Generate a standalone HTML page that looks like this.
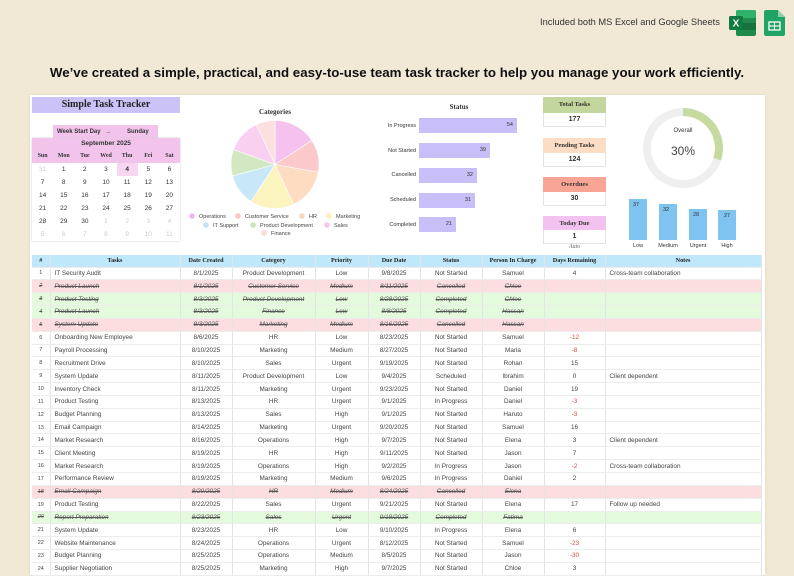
<!DOCTYPE html>
<html><head><meta charset="utf-8"><style>
*{margin:0;padding:0;box-sizing:border-box}
body{width:794px;height:572px;overflow:hidden;background:#f1e8d5;font-family:"Liberation Sans",sans-serif;position:relative;color:#333}
.a{position:absolute}
.serif{font-family:"Liberation Serif",serif;font-weight:bold}
.panel{left:30px;top:95px;width:735px;height:480px;background:#fff;box-shadow:0 0 2px #d8cfbb}
.cal{left:32px;top:138px;width:148px;height:103px;box-shadow:0 0 2px #ccc;background:#fff}
.cg{display:grid;grid-template-columns:repeat(7,1fr);font-size:6.5px;text-align:center}
.cg div{height:13px;line-height:13px}
.g{color:#ccc}
.kh{left:543px;width:63px;height:16px;font-size:6.5px;text-align:center;line-height:16px}
.kv{left:543px;width:63px;height:14px;font-size:7px;font-weight:bold;text-align:center;line-height:14px;border:1px solid #e4e4e4;border-top:none;background:#fff}
.sl{width:60px;text-align:right;font-size:5.5px;left:356px}
.sb{left:419px;height:15px;background:#c8bff8;font-size:5.5px;text-align:right;padding-right:4px;line-height:15px}
table{position:absolute;left:32px;top:255px;border-collapse:collapse;table-layout:fixed;width:729px}
td,th{height:12.85px;font-size:6.4px;text-align:center;border-right:1px solid #e4e4e4;border-bottom:1px solid #ececec;white-space:nowrap;overflow:hidden;padding:0 2px;color:#444}
th{height:12px;background:#bfe8fb;font-family:"Liberation Serif",serif;font-size:6.2px;color:#222}
td:nth-child(2),td:nth-child(10){text-align:left;padding-left:4px}
td:first-child{font-size:5.5px}
tr.p td{background:#fcdde0;text-decoration:line-through;font-style:italic;color:#555}
tr.gr td{background:#e4fadc;text-decoration:line-through;font-style:italic;color:#555}
.r{color:#e04848!important}
</style></head><body>
<div class="a" style="left:540px;top:17px;font-size:9.3px;color:#333">Included both MS Excel and Google Sheets</div>
<svg class="a" style="left:727px;top:9px" width="62" height="28" viewBox="0 0 62 28">
<rect x="9" y="1" width="20" height="26" rx="2" fill="#1f8a4c"/><rect x="9" y="1" width="20" height="8" rx="2" fill="#2fb36a"/><rect x="9" y="14" width="20" height="7" fill="#17713c"/>
<rect x="2" y="7" width="14" height="14" rx="1.5" fill="#107c41"/><text x="9" y="17.5" font-size="10" font-weight="bold" fill="#fff" text-anchor="middle" font-family="Liberation Sans">X</text>
<path d="M37 3 Q37 1 39 1 L51 1 L58 8 L58 25 Q58 27 56 27 L39 27 Q37 27 37 25Z" fill="#21a366"/><path d="M51 1 L51 8 L58 8Z" fill="#8ed1a9"/>
<rect x="42" y="13" width="11" height="8" fill="none" stroke="#fff" stroke-width="1.3"/><line x1="42" y1="17" x2="53" y2="17" stroke="#fff" stroke-width="1.1"/><line x1="47.5" y1="13" x2="47.5" y2="21" stroke="#fff" stroke-width="1.1"/>
</svg>
<div class="a" style="left:0;width:794px;top:65px;text-align:center;font-size:13.3px;font-weight:bold;color:#111">We’ve created a simple, practical, and easy-to-use team task tracker to help you manage your work efficiently.</div>
<div class="a panel"></div>
<div class="a serif" style="left:32px;top:97px;width:148px;height:16px;background:#cbc3f7;text-align:center;font-size:10px;line-height:16px;color:#222">Simple Task Tracker</div>
<div class="a" style="left:53px;top:125px;width:105px;height:14px;background:#f2c4ec;font-size:6px;font-weight:bold;line-height:14px"><span style="position:absolute;left:4px">Week Start Day</span><span style="position:absolute;left:52px">→</span><span style="position:absolute;left:74px">Sunday</span></div>
<div class="a cal">
<div style="background:#f2c4ec;height:12px;text-align:center;font-size:6.5px;font-weight:bold;line-height:12px">September 2025</div>
<div class="cg serif" style="background:#f2c4ec;font-size:6px"><div>Sun</div><div>Mon</div><div>Tue</div><div>Wed</div><div>Thu</div><div>Fri</div><div>Sat</div></div>
<div class="cg">
<div class="g">31</div><div>1</div><div>2</div><div>3</div><div style="background:#f7d6f1;font-weight:bold">4</div><div>5</div><div>6</div>
<div>7</div><div>8</div><div>9</div><div>10</div><div>11</div><div>12</div><div>13</div>
<div>14</div><div>15</div><div>16</div><div>17</div><div>18</div><div>19</div><div>20</div>
<div>21</div><div>22</div><div>23</div><div>24</div><div>25</div><div>26</div><div>27</div>
<div>28</div><div>29</div><div>30</div><div class="g">1</div><div class="g">2</div><div class="g">3</div><div class="g">4</div>
<div class="g">5</div><div class="g">6</div><div class="g">7</div><div class="g">8</div><div class="g">9</div><div class="g">10</div><div class="g">11</div>
</div></div>
<div class="a serif" style="left:240px;top:108px;width:70px;text-align:center;font-size:7px">Categories</div>
<svg class="a" style="left:0;top:0" width="794" height="260">
<g stroke="#fff" stroke-width="0.6">
<path d="M275 164.5 L275 120.5 A44 44 0 0 1 311.9 140.5Z" fill="#f5c2f0"/>
<path d="M275 164.5 L311.9 140.5 A44 44 0 0 1 318.3 172.2Z" fill="#fcc9cb"/>
<path d="M275 164.5 L318.3 172.2 A44 44 0 0 1 293.6 204.4Z" fill="#fddcc2"/>
<path d="M275 164.5 L293.6 204.4 A44 44 0 0 1 251 201.4Z" fill="#fbf4bf"/>
<path d="M275 164.5 L251 201.4 A44 44 0 0 1 232.5 175.9Z" fill="#c8e8f9"/>
<path d="M275 164.5 L232.5 175.9 A44 44 0 0 1 233.6 149.5Z" fill="#d2e8c3"/>
<path d="M275 164.5 L233.6 149.5 A44 44 0 0 1 256.4 124.6Z" fill="#f9d0f0"/>
<path d="M275 164.5 L256.4 124.6 A44 44 0 0 1 275 120.5Z" fill="#fcdfdf"/>
</g>
<g font-size="5.5" font-family="Liberation Sans" fill="#444">
<circle cx="192" cy="216" r="2.8" fill="#f2b8ee"/><text x="199" y="218">Operations</text>
<circle cx="238" cy="216" r="2.8" fill="#fcc3c3"/><text x="245" y="218">Customer Service</text>
<circle cx="302" cy="216" r="2.8" fill="#fcd8bb"/><text x="309" y="218">HR</text>
<circle cx="329" cy="216" r="2.8" fill="#fbf0b5"/><text x="336" y="218">Marketing</text>
<circle cx="206" cy="225" r="2.8" fill="#bfe3f8"/><text x="213" y="227">IT Support</text>
<circle cx="253" cy="225" r="2.8" fill="#c9e4bb"/><text x="260" y="227">Product Development</text>
<circle cx="327" cy="225" r="2.8" fill="#f7c8ee"/><text x="334" y="227">Sales</text>
<circle cx="264" cy="233" r="2.8" fill="#fcd8d8"/><text x="271" y="235">Finance</text>
</g>
<circle cx="683" cy="148" r="36" fill="none" stroke="#efefef" stroke-width="8"/>
<path d="M683 112 A36 36 0 0 1 717.2 159.1" fill="none" stroke="#c6d99f" stroke-width="8"/>
<g fill="#7fc3f1"><rect x="629" y="199" width="18" height="41"/><rect x="659" y="204" width="18" height="36"/><rect x="689" y="209" width="18" height="31"/><rect x="718" y="210" width="18" height="30"/></g>
<g font-size="5.5" font-family="Liberation Sans" fill="#333" text-anchor="middle">
<text x="636" y="206">37</text><text x="666" y="211">32</text><text x="696" y="216">28</text><text x="727" y="217">27</text>
<text x="638" y="247">Low</text><text x="668" y="247">Medium</text><text x="698" y="247">Urgent</text><text x="727" y="247">High</text>
</g>
</svg>
<div class="a" style="left:663px;top:128px;width:40px;text-align:center;font-size:6px">Overall</div>
<div class="a" style="left:653px;top:144px;width:60px;text-align:center;font-size:12px;color:#444">30%</div>
<div class="a serif" style="left:440px;top:103px;width:38px;text-align:center;font-size:7px">Status</div>
<div class="a sl" style="top:123px">In Progress</div><div class="a sb" style="top:118px;width:98px">54</div>
<div class="a sl" style="top:148px">Not Started</div><div class="a sb" style="top:143px;width:71px">39</div>
<div class="a sl" style="top:172px">Cancelled</div><div class="a sb" style="top:168px;width:58px">32</div>
<div class="a sl" style="top:197px">Scheduled</div><div class="a sb" style="top:193px;width:56px">31</div>
<div class="a sl" style="top:222px">Completed</div><div class="a sb" style="top:217px;width:37px">21</div>
<div class="a kh serif" style="top:97px;background:#c3d69d">Total Tasks</div><div class="a kv" style="top:113px">177</div>
<div class="a kh serif" style="top:138px;background:#fcdcc3">Pending Tasks</div><div class="a kv" style="top:153px">124</div>
<div class="a kh serif" style="top:177px;background:#f8a595">Overdues</div><div class="a kv" style="top:192px">30</div>
<div class="a kh serif" style="top:216px;background:#f3c2ee">Today Due</div><div class="a kv" style="top:230px">1</div>
<div class="a" style="left:543px;top:244px;width:63px;text-align:center;font-size:6px;font-style:italic;font-family:'Liberation Serif',serif;color:#666">Auto</div>
<table>
<colgroup><col style="width:18px"><col style="width:130px"><col style="width:52px"><col style="width:83px"><col style="width:53px"><col style="width:52px"><col style="width:62px"><col style="width:62px"><col style="width:61px"><col style="width:156px"></colgroup>
<tr><th>#</th><th>Tasks</th><th>Date Created</th><th>Category</th><th>Priority</th><th>Due Date</th><th>Status</th><th>Person In Charge</th><th>Days Remaining</th><th>Notes</th></tr>
<tr><td>1</td><td>IT Security Audit</td><td>8/1/2025</td><td>Product Development</td><td>Low</td><td>9/8/2025</td><td>Not Started</td><td>Samuel</td><td>4</td><td>Cross-team collaboration</td></tr>
<tr class="p"><td>2</td><td>Product Launch</td><td>8/1/2025</td><td>Customer Service</td><td>Medium</td><td>8/11/2025</td><td>Cancelled</td><td>Chloe</td><td></td><td></td></tr>
<tr class="gr"><td>3</td><td>Product Testing</td><td>8/3/2025</td><td>Product Development</td><td>Low</td><td>8/28/2025</td><td>Completed</td><td>Chloe</td><td></td><td></td></tr>
<tr class="gr"><td>4</td><td>Product Launch</td><td>8/3/2025</td><td>Finance</td><td>Low</td><td>8/8/2025</td><td>Completed</td><td>Hassan</td><td></td><td></td></tr>
<tr class="p"><td>5</td><td>System Update</td><td>8/3/2025</td><td>Marketing</td><td>Medium</td><td>8/16/2025</td><td>Cancelled</td><td>Hassan</td><td></td><td></td></tr>
<tr><td>6</td><td>Onboarding New Employee</td><td>8/6/2025</td><td>HR</td><td>Low</td><td>8/23/2025</td><td>Not Started</td><td>Samuel</td><td class="r">-12</td><td></td></tr>
<tr><td>7</td><td>Payroll Processing</td><td>8/10/2025</td><td>Marketing</td><td>Medium</td><td>8/27/2025</td><td>Not Started</td><td>Maria</td><td class="r">-8</td><td></td></tr>
<tr><td>8</td><td>Recruitment Drive</td><td>8/10/2025</td><td>Sales</td><td>Urgent</td><td>9/19/2025</td><td>Not Started</td><td>Rohan</td><td>15</td><td></td></tr>
<tr><td>9</td><td>System Update</td><td>8/11/2025</td><td>Product Development</td><td>Low</td><td>9/4/2025</td><td>Scheduled</td><td>Ibrahim</td><td>0</td><td>Client dependent</td></tr>
<tr><td>10</td><td>Inventory Check</td><td>8/11/2025</td><td>Marketing</td><td>Urgent</td><td>9/23/2025</td><td>Not Started</td><td>Daniel</td><td>19</td><td></td></tr>
<tr><td>11</td><td>Product Testing</td><td>8/13/2025</td><td>HR</td><td>Urgent</td><td>9/1/2025</td><td>In Progress</td><td>Daniel</td><td class="r">-3</td><td></td></tr>
<tr><td>12</td><td>Budget Planning</td><td>8/13/2025</td><td>Sales</td><td>High</td><td>9/1/2025</td><td>Not Started</td><td>Haruto</td><td class="r">-3</td><td></td></tr>
<tr><td>13</td><td>Email Campaign</td><td>8/14/2025</td><td>Marketing</td><td>Urgent</td><td>9/20/2025</td><td>Not Started</td><td>Samuel</td><td>16</td><td></td></tr>
<tr><td>14</td><td>Market Research</td><td>8/16/2025</td><td>Operations</td><td>High</td><td>9/7/2025</td><td>Not Started</td><td>Elena</td><td>3</td><td>Client dependent</td></tr>
<tr><td>15</td><td>Client Meeting</td><td>8/19/2025</td><td>HR</td><td>High</td><td>9/11/2025</td><td>Not Started</td><td>Jason</td><td>7</td><td></td></tr>
<tr><td>16</td><td>Market Research</td><td>8/19/2025</td><td>Operations</td><td>High</td><td>9/2/2025</td><td>In Progress</td><td>Jason</td><td class="r">-2</td><td>Cross-team collaboration</td></tr>
<tr><td>17</td><td>Performance Review</td><td>8/19/2025</td><td>Marketing</td><td>Medium</td><td>9/6/2025</td><td>In Progress</td><td>Daniel</td><td>2</td><td></td></tr>
<tr class="p"><td>18</td><td>Email Campaign</td><td>8/20/2025</td><td>HR</td><td>Medium</td><td>8/24/2025</td><td>Cancelled</td><td>Elena</td><td></td><td></td></tr>
<tr><td>19</td><td>Product Testing</td><td>8/22/2025</td><td>Sales</td><td>Urgent</td><td>9/21/2025</td><td>Not Started</td><td>Elena</td><td>17</td><td>Follow up needed</td></tr>
<tr class="gr"><td>20</td><td>Report Preparation</td><td>8/23/2025</td><td>Sales</td><td>Urgent</td><td>9/18/2025</td><td>Completed</td><td>Fatima</td><td></td><td></td></tr>
<tr><td>21</td><td>System Update</td><td>8/23/2025</td><td>HR</td><td>Low</td><td>9/10/2025</td><td>In Progress</td><td>Elena</td><td>6</td><td></td></tr>
<tr><td>22</td><td>Website Maintenance</td><td>8/24/2025</td><td>Operations</td><td>Urgent</td><td>8/12/2025</td><td>Not Started</td><td>Samuel</td><td class="r">-23</td><td></td></tr>
<tr><td>23</td><td>Budget Planning</td><td>8/25/2025</td><td>Operations</td><td>Medium</td><td>8/5/2025</td><td>Not Started</td><td>Jason</td><td class="r">-30</td><td></td></tr>
<tr><td>24</td><td>Supplier Negotiation</td><td>8/25/2025</td><td>Marketing</td><td>High</td><td>9/7/2025</td><td>Not Started</td><td>Chloe</td><td>3</td><td></td></tr>
</table>
</body></html>
